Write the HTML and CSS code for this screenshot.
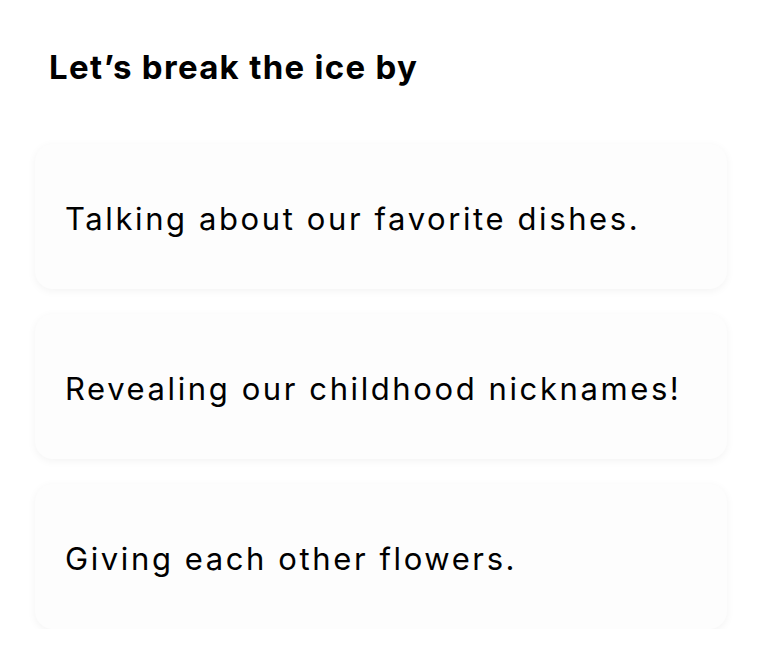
FILE: index.html
```html
<!DOCTYPE html>
<html>
<head>
<meta charset="utf-8">
<link rel="stylesheet" href="styles.css">
</head>
<body>
<main class="page">
  <h1 class="title">Let’s break the ice by</h1>
  <ul class="options">
    <li class="card">Talking about our favorite dishes.</li>
    <li class="card">Revealing our childhood nicknames!</li>
    <li class="card">Giving each other flowers.</li>
  </ul>
</main>
</body>
</html>
```

FILE: styles.css
```css
html, body {
  margin: 0;
  padding: 0;
  background: #ffffff;
}
.page {
  padding: 47px 41px 0 35px;
  font-family: Inter, "Noto Sans", sans-serif;
  color: #000;
}
.title {
  margin: 0 0 0 14px;
  font-size: 33px;
  font-weight: 700;
  line-height: 40px;
  letter-spacing: 1.3px;
}
.options {
  list-style: none;
  margin: 57px 0 0 0;
  padding: 0;
  display: flex;
  flex-direction: column;
  gap: 25px;
}
.card {
  height: 145px;
  box-sizing: border-box;
  display: flex;
  align-items: center;
  padding: 4px 30px 0;
  background: #fdfdfd;
  border-radius: 18px;
  box-shadow: 0 2px 8px rgba(0,0,0,0.05);
  font-size: 31px;
  font-weight: 400;
  letter-spacing: 2.6px;
}
```
